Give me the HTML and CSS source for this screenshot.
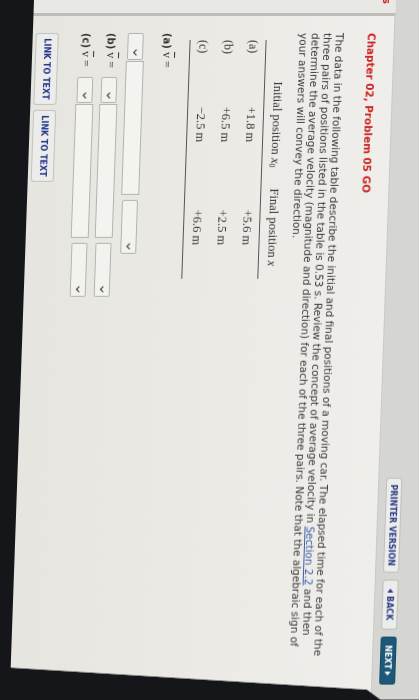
FILE: index.html
```html
<!DOCTYPE html>
<html>
<head>
<meta charset="utf-8">
<title>Chapter 02, Problem 05 GO</title>
<link rel="stylesheet" href="styles.css">
</head>
<body>
<div class="stage">
  <div class="page">
    <div class="screen">
      <div class="nav">
        <a class="nav-btn printer">PRINTER VERSION</a>
        <a class="nav-btn back"><svg width="4" height="6" viewBox="0 0 4 6"><polygon points="4,0 4,6 0,3" fill="#2a3a86"/></svg>BACK</a>
        <a class="nav-btn next">NEXT<svg width="4" height="6" viewBox="0 0 4 6"><polygon points="0,0 0,6 4,3" fill="#ffffff"/></svg></a>
      </div>
      <div class="main">
        <div class="side"><span class="side-label">Assignments</span></div>
        <div class="card">
          <h1 class="title">Chapter 02, Problem 05 GO</h1>
          <p class="prompt">The data in the following table describe the initial and final positions of a moving car. The elapsed time for each of the<br>three pairs of positions listed in the table is 0.53 s. Review the concept of average velocity in <a class="sec">Section 2.2</a> and then<br>determine the average velocity (magnitude and direction) for each of the three pairs. Note that the algebraic sign of<br>your answers will convey the direction.</p>
          <table class="data">
            <thead>
              <tr><th class="c-lab"></th><th class="c-val">Initial position <i>x</i><sub>0</sub></th><th class="c-val">Final position <i>x</i></th></tr>
            </thead>
            <tbody>
              <tr><td class="lab">(a)</td><td>+1.8 m</td><td>+5.6 m</td></tr>
              <tr><td class="lab">(b)</td><td>+6.5 m</td><td>+2.5 m</td></tr>
              <tr class="last"><td class="lab">(c)</td><td>&minus;2.5 m</td><td>+6.6 m</td></tr>
            </tbody>
          </table>
          <div class="answers">
            <div class="ans-solo"><b class="part">(a)</b> <span class="vbar">v</span> <span class="eq">=</span></div>
            <div class="ans-row first">
              <span class="sel sign wide"><svg width="7" height="4" viewBox="0 0 7 4"><polyline points="0.6,0.6 3.5,3.4 6.4,0.6" fill="none" stroke="#444" stroke-width="1.2"/></svg></span>
              <span class="num"></span>
              <span class="sel unit"><svg width="7" height="4" viewBox="0 0 7 4"><polyline points="0.6,0.6 3.5,3.4 6.4,0.6" fill="none" stroke="#444" stroke-width="1.2"/></svg></span>
            </div>
            <div class="ans-row">
              <span class="ans-label"><b class="part">(b)</b> <span class="vbar">v</span> <span class="eq">=</span></span>
              <span class="sel sign"><svg width="7" height="4" viewBox="0 0 7 4"><polyline points="0.6,0.6 3.5,3.4 6.4,0.6" fill="none" stroke="#444" stroke-width="1.2"/></svg></span>
              <span class="num"></span>
              <span class="sel unit"><svg width="7" height="4" viewBox="0 0 7 4"><polyline points="0.6,0.6 3.5,3.4 6.4,0.6" fill="none" stroke="#444" stroke-width="1.2"/></svg></span>
            </div>
            <div class="ans-row">
              <span class="ans-label"><b class="part">(c)</b> <span class="vbar">v</span> <span class="eq">=</span></span>
              <span class="sel sign"><svg width="7" height="4" viewBox="0 0 7 4"><polyline points="0.6,0.6 3.5,3.4 6.4,0.6" fill="none" stroke="#444" stroke-width="1.2"/></svg></span>
              <span class="num"></span>
              <span class="sel unit"><svg width="7" height="4" viewBox="0 0 7 4"><polyline points="0.6,0.6 3.5,3.4 6.4,0.6" fill="none" stroke="#444" stroke-width="1.2"/></svg></span>
            </div>
          </div>
          <div class="links">
            <a class="link-btn">LINK TO TEXT</a>
            <a class="link-btn">LINK TO TEXT</a>
          </div>
        </div>
      </div>
    </div>
  </div>
</div>
</body>
</html>
```
FILE: styles.css
```css
html, body {
  margin: 0;
  padding: 0;
  background: #15161a;
  overflow: hidden;
}

.stage {
  width: 419px;
  height: 700px;
  overflow: hidden;
  background: #15161a;
}

/* the photographed screen: laid out landscape, turned onto its side */
.page {
  width: 700px;
  height: 450px;
  transform-origin: 0 0;
  transform: matrix(-0.0349, 0.9994, -1, 0, 449, 0);
  background: #15161a;
  filter: blur(0.3px);
}

.screen {
  height: 415px;
  display: flex;
  flex-direction: column;
  background: #e6e6e2;
  clip-path: polygon(0 0, 700px 0, 700px 44px, 690px 58px, 668px 415px, 0 415px);
}

.nav {
  height: 53px;
  flex: none;
  box-sizing: border-box;
  display: flex;
  justify-content: flex-end;
  align-items: flex-start;
  gap: 7px;
  padding: 30px 15px 0 0;
  background: #d5d6d2;
}

.nav-btn {
  height: 16px;
  box-sizing: border-box;
  display: flex;
  align-items: center;
  justify-content: center;
  gap: 3px;
  font: bold 8px "DejaVu Sans", sans-serif;
  color: #2a3a86;
  background: #ececea;
  border: 1px solid #bfc0bc;
  border-radius: 3px;
}

.printer { width: 95px; }
.back { width: 50px; }
.next {
  width: 48px;
  background: #1e5878;
  border-color: #184a66;
  color: #ffffff;
}

.main {
  flex: 1;
  display: flex;
  min-height: 0;
}

.side {
  width: 13px;
  flex: none;
  box-sizing: border-box;
  display: flex;
  justify-content: flex-end;
  align-items: flex-start;
  padding: 4px 9px 0 0;
  background: #e8e8e4;
}

.side-label {
  flex: none;
  white-space: nowrap;
  font: bold 10px/12px "DejaVu Sans", sans-serif;
  color: #cc2424;
}

.card {
  flex: 1;
  box-sizing: border-box;
  border-left: 3px solid #bdbdb9;
  border-top: 1px solid #c9c9c5;
  padding: 15px 0 0 17px;
  background: linear-gradient(to bottom, #efeeea, #e6e5e0);
  color: #383838;
}

.title {
  margin: 0;
  font: bold 10.4px/14px "DejaVu Sans", sans-serif;
  color: #cc2424;
  white-space: nowrap;
}

.prompt {
  margin: 19px 0 0;
  font: 10.5px/12px "DejaVu Sans", sans-serif;
  white-space: nowrap;
}

.sec {
  color: #3c5ea8;
  text-decoration: underline;
}

.data {
  margin: 6px 0 0 7px;
  border-collapse: collapse;
  font: 12.5px "Liberation Serif", serif;
  color: #333333;
}

.data th {
  height: 25px;
  padding: 0;
  font-weight: normal;
  text-align: center;
  vertical-align: middle;
  border-bottom: 1px solid #555555;
}

.data .c-lab { width: 33px; }
.data .c-val { width: 103px; }

.data td {
  height: 25px;
  padding: 0;
  text-align: center;
  vertical-align: middle;
}

.data td.lab {
  text-align: left;
  font-size: 12px;
}

.data tr.last td {
  border-bottom: 1px solid #555555;
}

.data sub {
  font-size: 8px;
  vertical-align: -2px;
}

.answers {
  margin-top: 12px;
}

.ans-solo {
  height: 20px;
  display: flex;
  align-items: center;
  gap: 3px;
  white-space: nowrap;
}

.ans-row {
  height: 24.5px;
  display: flex;
  align-items: center;
}

.ans-row.first {
  margin-top: 9.75px;
}

.ans-label {
  width: 44px;
  flex: none;
  display: flex;
  align-items: center;
  gap: 3px;
  white-space: nowrap;
}

.part {
  font: bold 10px "DejaVu Sans", sans-serif;
  color: #333333;
}

.vbar {
  font: 12px "Liberation Serif", serif;
  text-decoration: overline;
  color: #333333;
}

.eq {
  font: 12px "Liberation Serif", serif;
  color: #333333;
}

.sel {
  width: 26px;
  height: 16px;
  flex: none;
  box-sizing: border-box;
  display: flex;
  align-items: center;
  justify-content: flex-end;
  padding-right: 3px;
  border: 1px solid #b3b3af;
  border-radius: 2px;
  background: #f2f2ef;
}

.sel.wide { width: 27px; }

.sel svg { display: block; }

.num {
  width: 134px;
  height: 18px;
  flex: none;
  margin-left: 1px;
  box-sizing: border-box;
  border: 1px solid #b3b3af;
  background: #f3f3f0;
}

.sel.unit {
  width: 54px;
  margin-left: 5px;
}

.links {
  margin-top: 15.75px;
  display: flex;
  gap: 5px;
}

.link-btn {
  width: 72px;
  height: 23px;
  box-sizing: border-box;
  display: flex;
  align-items: center;
  justify-content: center;
  font: bold 8px "DejaVu Sans", sans-serif;
  color: #23358a;
  background: #ececea;
  border: 1px solid #c2c2be;
  border-radius: 3px;
}
```
